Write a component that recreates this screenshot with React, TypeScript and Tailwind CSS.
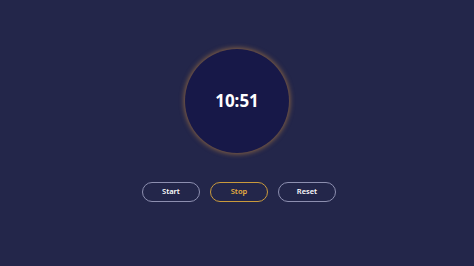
export default function App() {
  return (
    <div
      className="flex h-[266px] w-full flex-col items-center bg-[#23264a] pt-[49px]"
      style={{ fontFamily: '"Noto Sans", sans-serif' }}
    >
      {/* Timer face */}
      <div className="flex h-[104px] w-[104px] items-center justify-center rounded-full bg-[#171848] shadow-[0_0_5px_1px_rgba(220,150,60,0.55)]">
        <span className="text-[17px] font-bold text-white">10:51</span>
      </div>

      {/* Controls */}
      <div className="ml-[4px] mt-[29px] flex gap-[10px]">
        <button className="h-[20px] w-[58px] rounded-full border border-[#8d8fb0] text-[7.5px] font-semibold text-white">
          Start
        </button>
        <button className="h-[20px] w-[58px] rounded-full border border-[#c99a3c] text-[7.5px] font-semibold text-[#e8b040]">
          Stop
        </button>
        <button className="h-[20px] w-[58px] rounded-full border border-[#8d8fb0] text-[7.5px] font-semibold text-white">
          Reset
        </button>
      </div>
    </div>
  );
}
